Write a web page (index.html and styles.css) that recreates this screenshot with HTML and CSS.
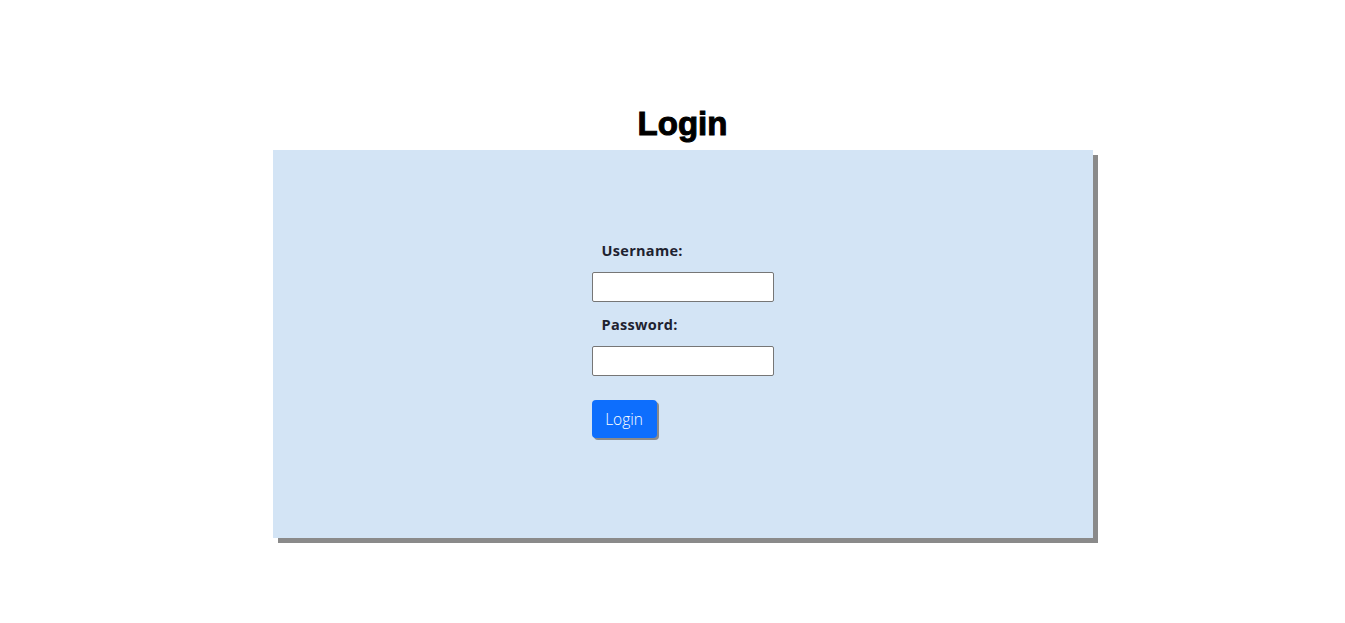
FILE: index.html
```html
<!DOCTYPE html>
<html lang="en">
<head>
<meta charset="utf-8">
<title>Login</title>
<link rel="stylesheet" href="styles.css">
</head>
<body>
<div class="page">
  <h1 class="title">Login</h1>
  <div class="panel">
    <form class="form">
      <label class="label" for="u">Username:</label>
      <input class="input" id="u" type="text">
      <label class="label" for="p">Password:</label>
      <input class="input" id="p" type="password">
      <button class="btn" type="button">Login</button>
    </form>
  </div>
</div>
</body>
</html>
```
FILE: styles.css
```css
html, body { margin: 0; padding: 0; background: #fff; }
.page {
  display: flex;
  flex-direction: column;
  align-items: center;
  padding: 101px 0 80px 20px;
}
.title {
  margin: 0 0 3px;
  font-family: "Liberation Sans", Arial, sans-serif;
  font-weight: 700;
  font-size: 33px;
  line-height: 46px;
  color: #000;
  -webkit-text-stroke: 1px #000;
}
.panel {
  width: 820px;
  box-sizing: border-box;
  background: #d3e4f5;
  box-shadow: 5px 5px 0 #8a8a8a;
  padding: 91px 0 100px;
  display: flex;
  justify-content: center;
}
.form {
  width: 182px;
  display: flex;
  flex-direction: column;
  align-items: flex-start;
}
.label {
  font-family: "Open Sans", "Noto Sans", sans-serif;
  font-weight: 700;
  font-size: 14.5px;
  line-height: 20px;
  color: #1e2230;
  padding-left: 10px;
  letter-spacing: 0.3px;
  margin-bottom: 11px;
}
.input {
  width: 182px;
  height: 30px;
  box-sizing: border-box;
  margin: 0 0 13px;
  border: 1px solid #767676;
  border-radius: 2px;
  background: #fff;
  padding: 0 4px;
}
.form .input:last-of-type { margin-bottom: 24px; }
.btn {
  width: 65px;
  height: 38px;
  border: none;
  border-radius: 4px;
  background: #0d6efd;
  color: #fff;
  font-family: "Open Sans", "Noto Sans", sans-serif;
  font-weight: 300;
  font-size: 15.5px;
  padding: 0;
  box-shadow: 2px 2px 0 #8a8a8a;
}
```
